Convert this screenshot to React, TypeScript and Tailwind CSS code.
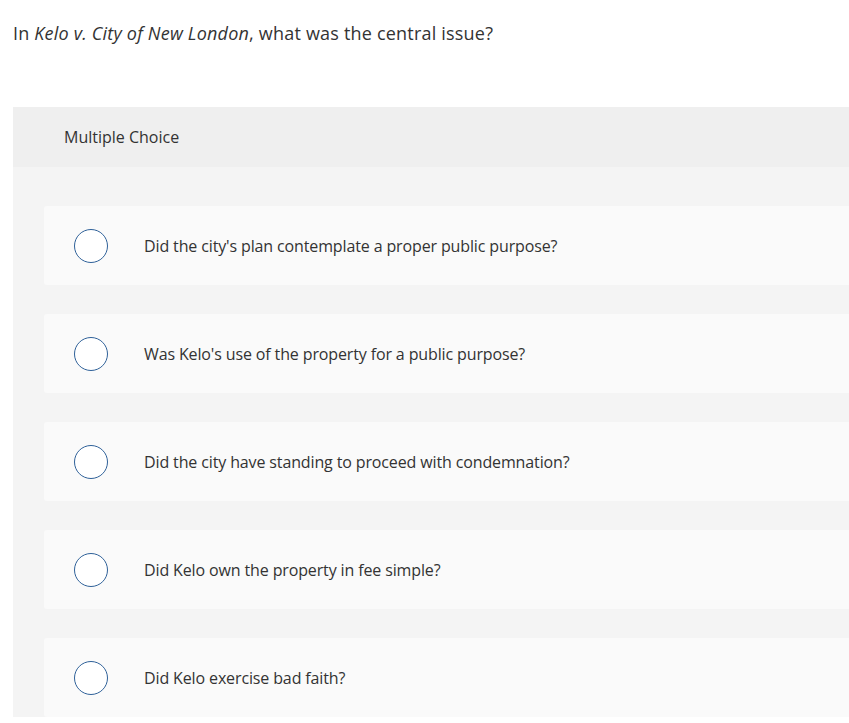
import React from "react";

const options = [
  "Did the city's plan contemplate a proper public purpose?",
  "Was Kelo's use of the property for a public purpose?",
  "Did the city have standing to proceed with condemnation?",
  "Did Kelo own the property in fee simple?",
  "Did Kelo exercise bad faith?",
];

export default function App() {
  return (
    <div
      className="w-[849px] h-[723px] overflow-hidden bg-white text-[#333333]"
      style={{ fontFamily: "'Open Sans', Lato, sans-serif" }}
    >
      <div className="pl-[13px] pt-[21px] h-[107px] text-[18px] leading-[24px] tracking-[0.2px]">
        In <em>Kelo v. City of New London</em>, what was the central issue?
      </div>
      <div className="ml-[13px] bg-[#f4f4f4]">
        <div className="h-[60px] bg-[#efefef] flex items-center pl-[51px] text-[16px]">
          Multiple Choice
        </div>
        <div className="pt-[39px] pl-[31px] flex flex-col gap-[29px]">
          {options.map((o) => (
            <div
              key={o}
              className="h-[79px] bg-[#fafafa] rounded-l-[3px] flex items-center pl-[30px]"
            >
              <div className="w-[34px] h-[34px] rounded-full border-[1.5px] border-[#2f6199] bg-white shrink-0" />
              <div className="ml-[36px] text-[16px] tracking-[-0.13px]">{o}</div>
            </div>
          ))}
        </div>
      </div>
    </div>
  );
}
